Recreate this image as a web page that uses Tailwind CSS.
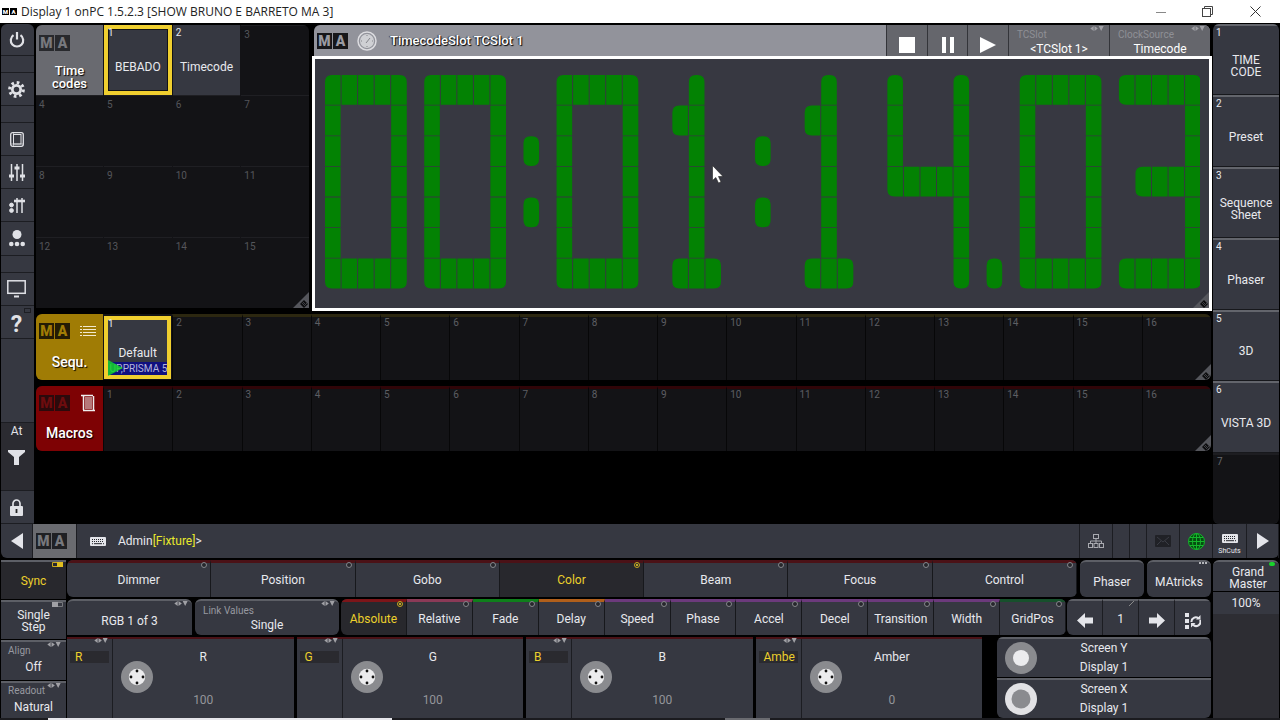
<!DOCTYPE html>
<html lang="en">
<head>
  <meta charset="UTF-8" />
  <meta name="viewport" content="width=device-width, initial-scale=1.0"/>
  <title>Display 1 onPC 1.5.2.3 [SHOW BRUNO E BARRETO MA 3]</title>
  <script src="https://cdn.jsdelivr.net/npm/@tailwindcss/browser@4"></script>
</head>
<body class="bg-black text-[#e8e9ee] font-[Roboto,sans-serif] text-xs leading-3 min-h-screen flex flex-col overflow-hidden">

  <!-- shared symbols -->
  <svg class="hidden">
    <symbol id="swipe" viewBox="0 0 16 6"><path d="M0 3 4 0v6zM5 0l4 3-4 3zM10 0h6l-3 6z" fill="#a0a0a5"/></symbol>
    <symbol id="resize" viewBox="0 0 16 16"><path d="M16 0v16H0z" fill="#55565c"/><path d="M7 12l4-4 4 4-4 4z" fill="#0c0c0e"/><path d="M9 12l2-2M11 14l3-3M10 13l2-2" stroke="#55565c" stroke-width=".7"/></symbol>
    <symbol id="knob" viewBox="0 0 32 32"><circle cx="16" cy="16" r="16" fill="#8a8b8f"/><circle cx="16" cy="16" r="8.2" fill="#ececee"/><g fill="#111"><circle cx="16" cy="10" r="1.4"/><circle cx="16" cy="22" r="1.4"/><circle cx="10" cy="16" r="1.4"/><circle cx="22" cy="16" r="1.4"/></g></symbol>
    <symbol id="keyboard" viewBox="0 0 16 9"><rect width="16" height="9" rx="1" fill="#e4e5ea"/><path d="M2 2.5h12M2 4.5h12" stroke="#26272d" stroke-dasharray="1 1"/><path d="M2 6.7h1M4 6.7h8M13 6.7h1" stroke="#26272d"/></symbol>
  </svg>

  <!-- title bar -->
  <header class="h-6 shrink-0 bg-white text-[#222] flex items-center pl-[2px] border-b border-black">
    <span class="flex gap-px text-[6px] leading-[7px] font-bold text-white">
      <b class="bg-black w-[7px] h-[7px] text-center">M</b><b class="bg-black w-[7px] h-[7px] text-center">A</b>
    </span>
    <h1 class="ml-1 font-['Open_Sans',sans-serif] text-xs">Display 1 onPC 1.5.2.3 [SHOW BRUNO E BARRETO MA 3]</h1>
    <div class="ml-auto flex">
      <button aria-label="Minimize" class="w-[46px] h-[22px] flex items-center justify-center"><svg class="w-[10px] h-[10px]"><path d="M0 5.5h10" stroke="#888"/></svg></button>
      <button aria-label="Restore" class="w-[46px] h-[22px] flex items-center justify-center"><svg class="w-[11px] h-[11px]" fill="none" stroke="#444"><rect x=".5" y="2.5" width="8" height="8"/><path d="M2.5 2.500V.5h8v8h-2"/></svg></button>
      <button aria-label="Close" class="w-[50px] h-[22px] flex items-center justify-center"><svg class="w-[11px] h-[11px]" stroke="#333"><path d="M.5.5l10 10M10.5.5l-10 10"/></svg></button>
    </div>
  </header>

  <div class="flex flex-1">
    <!-- control bar -->
    <nav class="ml-px w-[33px] bg-[#363841] rounded-t-md flex flex-col text-[#e0e1e6] *:border-b *:border-[#1c1d22] *:flex *:items-center *:justify-center *:pr-[2px]">
      <button aria-label="Power" class="h-8"><svg class="w-4 h-4" viewBox="0 0 16 16" fill="none" stroke="currentColor" stroke-width="2.2"><path d="M4.500 3.200a6.200 6.200 0 1 0 7 0M8 0v7.500"/></svg></button>
      <div class="h-[17px]"></div>
      <button aria-label="Settings" class="h-[33px]"><svg class="w-[17px] h-[17px]" viewBox="0 0 16 16" fill="none" stroke="currentColor"><circle cx="8" cy="8" r="3.900" stroke-width="2.600"/><circle cx="8" cy="8" r="6.500" stroke-width="2.800" stroke-dasharray="2.500 2.605"/></svg></button>
      <div class="h-[17px]"></div>
      <button aria-label="Views" class="h-[33px]"><svg class="w-[14px] h-[15px]" viewBox="0 0 14 15" fill="none" stroke="currentColor"><rect x=".7" y=".7" width="12.600" height="13.600" rx="2" stroke-width="1.300"/><rect x="3.500" y="2.500" width="7.500" height="9.500"/><path d="M1 12h12M3.500 1v13" stroke-width=".6"/></svg></button>
      <button aria-label="Faders" class="h-[33px]"><svg class="w-4 h-[17px]" viewBox="0 0 16 17" stroke="currentColor"><path d="M2.500 0v17M8 0v17M13.500 0v17" stroke-width="1.500"/><path d="M0 12h5M5.500 4h5M11 12h5" stroke-width="3"/></svg></button>
      <button aria-label="Encoders" class="h-[33px]"><svg class="w-4 h-4" viewBox="0 0 16 16" fill="currentColor" stroke="currentColor"><path d="M8 1v15M13 1v15" stroke-width="1.500"/><path d="M5 4h11" stroke-width="2.600"/><circle cx="2.500" cy="8" r="1.900"/><circle cx="2.500" cy="13.500" r="1.900"/></svg></button>
      <button aria-label="Fixtures" class="h-[34px]"><svg class="w-4 h-[17px]" viewBox="0 0 16 17" fill="currentColor"><circle cx="8" cy="4.500" r="4.500"/><circle cx="2.300" cy="14" r="2.300"/><circle cx="8" cy="14" r="2.300"/><circle cx="13.700" cy="14" r="2.300"/></svg></button>
      <div class="h-[17px]"></div>
      <button aria-label="Screens" class="h-[33px]"><svg class="w-[19px] h-[18px]" viewBox="0 0 19 18" fill="none" stroke="currentColor"><rect x=".8" y=".8" width="17.400" height="12.500" stroke-width="1.500"/><path d="M7 16.500h5" stroke-width="2"/></svg></button>
      <button aria-label="Help" class="h-[33px] relative text-[23px] leading-6 font-bold pt-[6px]">?<span class="absolute right-[3px] top-[2px] w-[7px] h-[5px] border border-[#1d1e23]"></span></button>
      <div class="h-[84px]"></div>
      <button class="h-[68px] flex-col gap-[13px] bg-[#2b2b31] pb-6">At<svg class="w-[17px] h-[15px]" viewBox="0 0 17 15"><path d="M0 0h17v2l-6 5v8H6V7L0 2z" fill="currentColor"/></svg></button>
      <button aria-label="Lock" class="h-[33px]"><svg class="w-[13px] h-[17px]" viewBox="0 0 13 17"><path d="M3 8V4.500a3.500 3.500 0 0 1 7 0V8" fill="none" stroke="currentColor" stroke-width="1.700"/><rect y="7" width="13" height="10" rx="1" fill="currentColor"/><path d="M6.500 10v4" stroke="#222" stroke-width="1.800"/></svg></button>
    </nav>

    <main class="flex-1 px-[2px] pt-px flex flex-col">
      <div class="flex gap-[3px] h-[286px]">
        <!-- timecode pool -->
        <section class="relative w-[273px] h-[283px] bg-[#131316] rounded-t-md overflow-hidden grid grid-cols-[67px_1fr_1fr_1fr] grid-rows-[70px_1fr_1fr_1fr] gap-x-px text-[10px] leading-[10px]" id="timecodePool">
          <div class="bg-[#696a70] pt-[10px] pl-[3px]">
            <span class="flex gap-px text-sm leading-4 font-bold text-[#77787d]"><b class="bg-[#28292d] w-[15px] text-center">M</b><b class="bg-[#28292d] w-[15px] text-center">A</b></span>
            <h2 class="text-[13px] leading-[13px] font-medium text-white text-center mt-[13px] pr-[3px] [text-shadow:1px_1px_1px_#000]">Time<br>codes</h2>
          </div>
          <button class="relative bg-[#363841] border-4 border-[#f0cf2f] outline outline-1 outline-[#131316] -outline-offset-5 text-xs pt-[14px]"><span class="absolute -top-px left-0 text-[10px] leading-[10px]">1</span>BEBADO</button>
          <button class="relative bg-[#363841] text-xs pt-[14px]"><span class="absolute top-[3px] left-[3px] text-[10px] leading-[10px]">2</span>Timecode</button>
        </section>

        <!-- timecode window -->
        <section class="flex-1 flex flex-col -mr-px">
          <div class="flex h-[31px] mx-[2px] rounded-t-md overflow-hidden bg-[#92939b] text-white">
            <div class="flex items-center flex-1 pl-[3px] pt-px">
              <span class="flex gap-px text-sm leading-4 font-bold text-[#9a9ba2]"><b class="bg-[#17171a] w-[15px] text-center">M</b><b class="bg-[#17171a] w-[15px] text-center">A</b></span>
              <svg class="ml-[9px] w-5 h-5" viewBox="0 0 20 20" fill="none" stroke="#dcdce0"><circle cx="10" cy="10" r="9" stroke-width="1.500"/><circle cx="10" cy="10" r="7" fill="#cfd0d4" stroke="none"/><path d="M9 12l4-5M10 4v1M10 15v1M4 10h1M15 10h1" stroke="#85868c"/></svg>
              <h2 class="ml-[13px] text-[13px] font-medium [text-shadow:1px_1px_1px_#000,-1px_0_1px_#333]">TimecodeSlot TCSlot 1</h2>
            </div>
            <div class="flex *:bg-[#65666c] *:border-l *:border-[#333439]">
              <button aria-label="Stop" class="w-[41px] pt-2 flex items-center justify-center"><svg class="w-4 h-4"><path d="M0 0h16v16H0z" fill="#fff"/></svg></button>
              <button aria-label="Pause" class="w-10 pt-2 flex items-center justify-center"><svg class="w-3 h-4"><path d="M0 0h4v16H0zM8 0h4v16H8z" fill="#fff"/></svg></button>
              <button aria-label="Play" class="w-[41px] pt-2 flex items-center justify-center"><svg class="w-4 h-4"><path d="M0 0l16 8-16 8z" fill="#fff"/></svg></button>
              <button class="relative w-[101px] pt-[17px]"><span class="absolute left-2 top-[5px] text-[10px] leading-[10px] text-[#8f9096]">TCSlot</span><svg class="absolute right-1 top-px w-4 h-[5px]"><use href="#swipe"/></svg>&lt;TCSlot 1&gt;</button>
              <button class="relative w-[101px] pt-[17px]"><span class="absolute left-2 top-[5px] text-[10px] leading-[10px] text-[#8f9096]">ClockSource</span><svg class="absolute right-1 top-px w-4 h-[5px]"><use href="#swipe"/></svg>Timecode</button>
            </div>
          </div>
          <div class="relative flex-1 bg-[#373841] border-3 border-white pl-[10px] pr-[9px] pt-4">
            <svg id="clock" class="w-full" viewBox="0 0 875 214" role="img" aria-label="00:01:14.03"></svg>
            <svg class="absolute right-0 bottom-0 w-4 h-4"><use href="#resize"/></svg>
            <svg class="absolute left-[397px] top-[106px] w-3 h-[18px]" viewBox="0 0 12 18"><path d="M.500.500v15l3.300-3 2.700 5.500 2.500-1-2.500-5.500h4.500z" fill="#fff" stroke="#222" stroke-width=".6"/></svg>
          </div>
        </section>
      </div>

      <!-- sequence pool -->
      <section class="relative mt-[3px] h-[66px] rounded-md overflow-hidden bg-[#131316] grid grid-cols-[67px_repeat(16,minmax(0,1fr))] text-[10px] leading-[10px] [&>i]:border-t-3 [&>i]:border-t-[#2c2710]" id="sequPool">
        <div class="bg-[#a07c05] pt-[9px] pl-[3px]">
          <div class="flex items-center gap-[10px]">
            <span class="flex gap-px text-sm leading-4 font-bold text-[#a07c05]"><b class="bg-[#241c05] w-[15px] text-center">M</b><b class="bg-[#241c05] w-[15px] text-center">A</b></span>
            <svg class="w-4 h-[10px]" stroke="#f2ead0"><path d="M0 .5h2M3 .5h13M0 3.500h2M3 3.500h13M0 6.500h2M3 6.500h13M0 9.500h2M3 9.500h13"/></svg>
          </div>
          <h2 class="text-sm font-medium text-white text-center mt-[13px] pr-[3px] [text-shadow:1px_1px_1px_#000]">Sequ.</h2>
        </div>
        <button class="relative m-px mt-0.5 bg-[#363841] border-4 border-[#f0cf2f] text-xs pt-[11px]"><span class="absolute -top-px left-0 text-[10px] leading-[10px]">1</span>Default
          <span class="absolute inset-x-0 bottom-0 h-[13px] bg-[#10107f] text-[10px] leading-[13px] text-[#b5b5dd] flex justify-end whitespace-nowrap">UP,PRISMA 5</span>
          <svg class="absolute left-0 -bottom-px w-[15px] h-4"><path d="M0 0l15 8-15 8z" fill="#14d62a" fill-opacity=".85"/></svg>
        </button>
      </section>

      <!-- macro pool -->
      <section class="relative mt-[6px] h-[65px] rounded-md overflow-hidden bg-[#131316] grid grid-cols-[67px_repeat(16,minmax(0,1fr))] text-[10px] leading-[10px] [&>i]:border-t-3 [&>i]:border-t-[#300508]" id="macroPool">
        <div class="bg-[#7e0204] pt-2 pl-[3px]">
          <div class="flex items-center gap-[10px]">
            <span class="flex gap-px text-sm leading-4 font-bold text-[#6d0c0e]"><b class="bg-[#2b0a0c] w-[15px] text-center">M</b><b class="bg-[#2b0a0c] w-[15px] text-center">A</b></span>
            <svg class="w-4 h-[18px]" viewBox="0 0 16 18" fill="none" stroke="#eee"><path d="M1 1.500h12M3.500 2v14M13.500 2v14" stroke-width="1.500"/><path d="M5 4h7M5 6h7M5 8h7M5 10h7M5 12h7M5 14h7"/><path d="M3 16.500h12" stroke-width="1.500"/></svg>
          </div>
          <h2 class="text-sm font-medium text-white text-center mt-[11px] pr-[3px] [text-shadow:1px_1px_1px_#000]">Macros</h2>
        </div>
      </section>
    </main>

    <!-- view bar -->
    <aside class="mr-px w-[66px] grid grid-rows-7 rounded-t-md overflow-hidden *:relative *:bg-[#363841] *:border-t-2 *:border-t-[#63656c] *:pt-[11px] *:border-b *:border-b-[#17181c]" id="views"></aside>
  </div>

  <!-- command line -->
  <div class="mx-px h-[34px] shrink-0 bg-[#363841] flex rounded-b-md *:border-r *:border-[#1c1d22]">
    <button aria-label="Back" class="w-8 flex items-center justify-center"><svg class="w-3 h-4"><path d="M12 0v16L0 8z" fill="#e4e5ea"/></svg></button>
    <div class="w-11 bg-[#6a6b70] flex items-center pl-[3px] gap-px text-sm leading-4 font-bold text-[#77787d]"><b class="bg-[#1f2024] w-[15px] text-center">M</b><b class="bg-[#1f2024] w-[15px] text-center">A</b></div>
    <label class="flex-1 flex items-center pl-[13px]">
      <svg class="w-4 h-[9px] mr-3"><use href="#keyboard"/></svg>
      <span>Admin<span class="text-[#e9ea2c]">[Fixture]</span>&gt;</span>
      <input type="text" aria-label="Command line" class="flex-1 outline-none pl-1"/>
    </label>
    <button aria-label="Network" class="w-[33px] flex items-center justify-center"><svg class="w-4 h-[14px]" viewBox="0 0 16 14" fill="none" stroke="#a9aab0"><rect x="5.500" y=".5" width="5" height="4"/><path d="M8 5v2M2.500 9.500V7h11v2.500M8 7v2"/><rect x=".5" y="9.500" width="4" height="4"/><rect x="6" y="9.500" width="4" height="4"/><rect x="11.500" y="9.500" width="4" height="4"/></svg></button>
    <div class="w-[17px]"></div>
    <div class="w-[17px]"></div>
    <button aria-label="Messages" class="w-[33px] flex items-center justify-center"><svg class="w-4 h-3" viewBox="0 0 16 12"><rect width="16" height="12" rx="1" fill="#202126"/><path d="M2 2l6 5 6-5M2 10l4-4M14 10l-4-4" fill="none" stroke="#3a3c44"/></svg></button>
    <button aria-label="World" class="w-[33px] flex items-center justify-center"><svg class="w-[17px] h-[17px]" viewBox="0 0 17 17"><circle cx="8.500" cy="8.500" r="8" fill="#054d10" stroke="#15b52c"/><g fill="none" stroke="#15b52c"><ellipse cx="8.500" cy="8.500" rx="4" ry="8"/><path d="M8.500.5v16M.5 8.500h16M2 4.500h13M2 12.500h13"/></g></svg></button>
    <button class="w-[34px] pt-[10px] flex flex-col items-center gap-[4px] text-[7px] leading-[9px]"><svg class="w-4 h-[9px]"><use href="#keyboard"/></svg>ShCuts</button>
    <button aria-label="Forward" class="w-8 flex items-center justify-center"><svg class="w-3 h-4"><path d="M0 0v16l12-8z" fill="#e4e5ea"/></svg></button>
  </div>

  <!-- encoder bar -->
  <div class="mx-px mt-[2px] h-[158px] shrink-0 flex">
    <div class="w-[65px] grid grid-rows-[39px_39px_40px_37px] gap-[1px] *:relative *:border-t-2 *:border-[#5d5f66]">
      <button class="bg-[#28282d] text-[#ecd02c]"><svg class="absolute right-[3px] top-0 w-[11px] h-[5px]"><path d="M.5.5h10v4H.5z" fill="none" stroke="#c9a91d"/><path d="M5 0h6v5H5z" fill="#e0be20"/></svg>Sync</button>
      <button class="bg-[#363841] pt-px"><svg class="absolute right-[3px] top-0 w-[11px] h-[5px]"><path d="M.5.5h10v4H.5z" fill="none" stroke="#77787d"/><path d="M0 0h6v5H0z" fill="#a0a0a5"/></svg>Single<br>Step</button>
      <button class="bg-[#363841] pt-[11px]"><span class="absolute left-[7px] top-[3px] text-[10px] leading-3 text-[#9698a0]">Align</span><svg class="absolute right-1 top-0 w-4 h-[5px]"><use href="#swipe"/></svg>Off</button>
      <button class="bg-[#363841] pt-[13px]"><span class="absolute left-[7px] top-[2px] text-[10px] leading-3 text-[#9698a0]">Readout</span><svg class="absolute right-1 top-0 w-4 h-[5px]"><use href="#swipe"/></svg>Natural</button>
    </div>

    <div class="flex-1 ml-px mr-[2px] flex flex-col gap-[2px]">
      <div class="flex gap-[3px] h-[39px]">
        <div class="flex-1 grid grid-cols-7 rounded-md overflow-hidden *:relative" id="features"></div>
        <button class="w-16 bg-[#363841] border-t-2 border-[#5d5f66] rounded-md pt-1">Phaser</button>
        <button class="relative w-16 bg-[#363841] border-t-2 border-[#5d5f66] rounded-md pt-1"><span class="absolute right-1 top-0 flex gap-px *:w-[2px] *:h-[2px] *:bg-[#b5b6bb]"><i></i><i></i><i></i></span>MAtricks</button>
      </div>

      <div class="flex h-[37px]">
        <button class="relative w-[125px] bg-[#363841] border-t-2 border-[#5d5f66] rounded-t-md pt-[6px]"><svg class="absolute right-[3px] top-0 w-4 h-[5px]"><use href="#swipe"/></svg>RGB 1 of 3</button>
        <button class="relative ml-[3px] w-36 bg-[#363841] border-t-2 border-[#5d5f66] rounded-md pt-[14px]"><span class="absolute left-2 top-1 text-[10px] leading-3 text-[#9698a0]">Link Values</span><svg class="absolute right-[3px] top-0 w-4 h-[5px]"><use href="#swipe"/></svg>Single</button>
        <div class="ml-[2px] flex-1 grid grid-cols-11 rounded-md overflow-hidden *:relative" id="layers"></div>
        <div class="ml-px w-36 grid grid-cols-4 rounded-md overflow-hidden *:relative *:bg-[#363841] *:border-t-2 *:border-t-[#5d5f66] *:border-r *:border-r-[#1c1d22] *:flex *:items-center *:justify-center *:pt-[5px]">
          <button aria-label="Previous"><svg class="w-4 h-[15px]" viewBox="0 0 16 15"><path d="M0 7.500L8 0v4.500h8v6H8V15z" fill="#e4e5ea"/></svg></button>
          <button class="!pt-px">1<svg class="absolute right-1 top-0 w-[5px] h-[5px]" stroke="#888"><path d="M0 5l5-5"/></svg></button>
          <button aria-label="Next"><svg class="w-4 h-[15px]" viewBox="0 0 16 15"><path d="M16 7.500L8 0v4.500H0v6h8V15z" fill="#e4e5ea"/></svg></button>
          <button aria-label="Reset"><svg class="w-4 h-4" viewBox="0 0 16 16"><path d="M0 0h4v4H0zM0 6h4v4H0zM0 12h4v4H0z" fill="#e4e5ea"/><path d="M6.500 9a4.200 4.200 0 0 1 7-3.500M15 7a4.200 4.200 0 0 1-7 4.500" fill="none" stroke="#e4e5ea" stroke-width="2"/><path d="M11 6.500h4.500V2zM10.500 10H6v4.500z" fill="#e4e5ea"/></svg></button>
        </div>
      </div>

      <div class="flex-1 flex">
        <div class="flex-1 grid grid-cols-4 gap-[3px]" id="encoders"></div>
        <div class="ml-[15px] w-[214px] grid grid-rows-2 gap-px rounded-md overflow-hidden *:bg-[#363841] *:border-t-2 *:border-[#5d5f66] *:grid *:grid-cols-[48px_1fr_48px] *:items-center">
          <button><svg class="ml-2 w-8 h-8" viewBox="0 0 32 32"><circle cx="16" cy="16" r="16" fill="#8a8b8f"/><circle cx="16" cy="16" r="8" fill="#ececee"/></svg><span class="leading-[19px]">Screen Y<br>Display 1</span></button>
          <button><svg class="ml-2 w-8 h-8" viewBox="0 0 32 32"><circle cx="16" cy="16" r="16" fill="#e2e2e5"/><circle cx="16" cy="16" r="9.500" fill="#8a8b8f"/></svg><span class="leading-[19px]">Screen X<br>Display 1</span></button>
        </div>
      </div>
    </div>

    <div class="w-[66px] bg-[#2d2d33] border-t-2 border-[#5d5f66] rounded-t-md overflow-hidden relative text-center">
      <button class="w-full h-[30px] bg-[#363841] border-b border-black pt-[3px] pl-1">Grand<br>Master</button>
      <span class="absolute right-1 top-0 w-[6px] h-1 bg-[#19d42c] rounded-sm"></span>
      <div class="h-[22px] bg-[#363841] leading-[22px]">100%</div>
    </div>
  </div>
  <footer class="h-[2px] shrink-0 flex bg-[#1b1b1f]">
    <div class="ml-12 w-[344px] bg-[#e6e6ea]"></div>
    <div class="ml-[333px] w-[45px] bg-[#6a6b70]"></div>
  </footer>

  <script>
    const resize = '<svg class="absolute right-0 bottom-0 w-4 h-4"><use href="#resize"/></svg>';
    const byId = (id) => document.getElementById(id);

    // empty pool cells
    function cells(from, to, cls) {
      let html = '';
      for (let n = from; n <= to; n++) html += `<i class="${cls}">${n}</i>`;
      return html;
    }
    byId('timecodePool').innerHTML += cells(3, 15, 'not-italic text-[#55565b] pl-[3px] pt-1 border-t border-[#1f1f23]') + resize;
    byId('sequPool').innerHTML += cells(2, 16, 'not-italic text-[#5d5e63] pl-[3px] pt-px border-l border-l-[#070708]') + resize;
    byId('macroPool').innerHTML += cells(1, 16, 'not-italic text-[#5d5e63] pl-[3px] pt-px border-l border-l-[#070708]') + resize;

    // view buttons
    byId('views').innerHTML = ['TIME<br>CODE', 'Preset', 'Sequence<br>Sheet', 'Phaser', '3D', 'VISTA 3D']
      .map((v, i) => `<button><span class="absolute left-[3px] top-[2px] text-[10px] leading-[10px]">${i + 1}</span>${v}</button>`).join('')
      + '<div class="!bg-[#131316] !border-t-[#1d1d21] rounded-b-md"><span class="absolute left-1 top-[2px] text-[10px] leading-[10px] text-[#66676c]">7</span></div>';

    // feature groups and layers
    function dot(on) {
      return on
        ? '<svg class="absolute right-[3px] -top-px w-[6px] h-[6px]"><circle cx="3" cy="3" r="2.500" fill="none" stroke="#c9a91d"/><circle cx="3" cy="3" r="1" fill="#ecd02c"/></svg>'
        : '<svg class="absolute right-[3px] -top-px w-[6px] h-[6px]"><circle cx="3" cy="3" r="2.500" fill="#26272c" stroke="#86878c"/></svg>';
    }
    function tab(name, line, on) {
      const look = on ? 'bg-[#28282d] text-[#ecd02c]' : 'bg-[#363841]';
      return `<button class="${look} ${line} border-t-3 border-r border-r-[#17181c]">${dot(on)}${name}</button>`;
    }
    byId('features').innerHTML = ['Dimmer', 'Position', 'Gobo', 'Color', 'Beam', 'Focus', 'Control']
      .map((n) => tab(n, 'border-t-[#4b1217]', n === 'Color')).join('');
    byId('layers').innerHTML = [
      ['Absolute', 'border-t-[#7c1519]'], ['Relative', 'border-t-[#8b3a57]'], ['Fade', 'border-t-[#0f7f1b]'],
      ['Delay', 'border-t-[#b05f1b]'], ['Speed', 'border-t-[#6c3a7c]'], ['Phase', 'border-t-[#6c3a7c]'],
      ['Accel', 'border-t-[#6c3a7c]'], ['Decel', 'border-t-[#6c3a7c]'], ['Transition', 'border-t-[#6c3a7c]'],
      ['Width', 'border-t-[#6c3a7c]'], ['GridPos', 'border-t-[#17502c]'],
    ].map(([n, line]) => tab(n, line, n === 'Absolute')).join('');

    // encoders, the attribute tag has room for four letters
    byId('encoders').innerHTML = [['R', 100], ['G', 100], ['B', 100], ['Amber', 0]].map(([n, v]) => `
      <div class="flex bg-[#363841] border-t-2 border-[#4b1217]">
        <button class="relative w-[46px] border-r border-[#1c1d22] pt-3 px-[3px] flex items-start"><svg class="absolute right-[3px] -top-px w-4 h-[5px]"><use href="#swipe"/></svg><span class="w-full h-3 bg-[#2a2a2f] text-[#ecd02c] text-left pl-[5px]">${n.slice(0, 4)}</span></button>
        <button class="relative flex-1 flex flex-col items-center justify-between pt-3 pb-3"><svg class="absolute left-2 top-[22px] w-8 h-8"><use href="#knob"/></svg><span>${n}</span><span class="text-[#94959a]">${v}</span></button>
      </div>`).join('');

    // segment clock: 53 x 7 grid, corners are rounded where no neighbour touches them
    const digits = {
      '0': ['#####', '#...#', '#...#', '#...#', '#...#', '#...#', '#####'],
      '1': ['..#..', '.##..', '..#..', '..#..', '..#..', '..#..', '.###.'],
      '3': ['#####', '....#', '....#', '.####', '....#', '....#', '#####'],
      '4': ['#...#', '#...#', '#...#', '#####', '....#', '....#', '....#'],
      ':': ['.', '.', '#', '.', '#', '.', '.'],
      '.': ['.', '.', '.', '.', '.', '.', '#'],
    };
    const rows = Array(7).fill('');
    for (const ch of '00:01:14.03') digits[ch].forEach((r, i) => { rows[i] += r + '.'; });
    const lit = (x, y) => rows[y] !== undefined && rows[y][x] === '#';
    let d = '';
    for (let y = 0; y < 7; y++) {
      for (let x = 0; x < 53; x++) {
        if (!lit(x, y)) continue;
        const l = x * 16.54, t = y * 30.6, r = l + 15.6, b = t + 29.8;
        const c = (dx, dy) => (lit(x + dx, y) || lit(x, y + dy) ? 0 : 7);
        const tl = c(-1, -1), tr = c(1, -1), br = c(1, 1), bl = c(-1, 1);
        d += `M${l + tl} ${t}H${r - tr}Q${r} ${t} ${r} ${t + tr}V${b - br}Q${r} ${b} ${r - br} ${b}H${l + bl}Q${l} ${b} ${l} ${b - bl}V${t + tl}Q${l} ${t} ${l + tl} ${t}Z`;
      }
    }
    byId('clock').innerHTML = `<path d="${d}" fill="#038203"/>`;
  </script>
</body>
</html>
